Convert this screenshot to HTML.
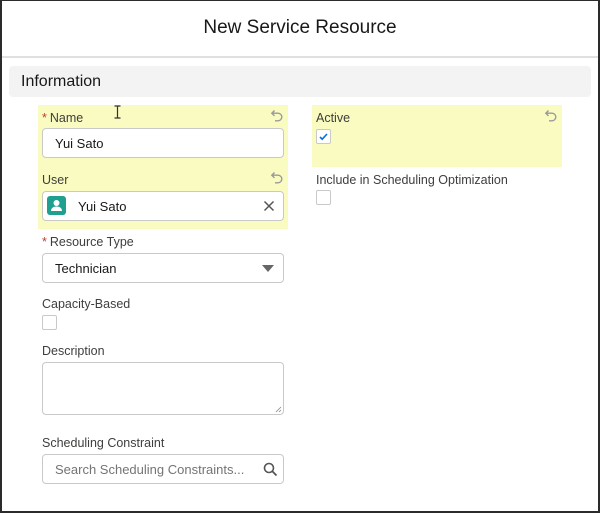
<!DOCTYPE html>
<html><head><style>
*{box-sizing:border-box;margin:0;padding:0}
body{width:600px;height:513px;background:#fff;font-family:"Liberation Sans",Arial,sans-serif;color:#181818;position:relative;overflow:hidden}
.frame{position:absolute;left:0;top:0;width:600px;height:513px;border:2px solid #2b2b2b;border-top-width:1px}
.a{position:absolute}
.title{left:0;width:600px;top:17px;text-align:center;font-size:19px;color:#181818}
.hline{left:2px;top:56px;width:596px;height:2px;background:#e0e0e0}
.sec{left:9px;top:66px;width:582px;height:31px;background:#f3f3f3;border-radius:4px}
.sec span{position:absolute;left:12px;top:7px;font-size:16px}
.hl{background:#fafbc0}
.lbl{font-size:12.5px;color:#3e3e3c}
.req{color:#c23934;margin-right:3px}
.inp{background:#fff;border:1px solid #c9c9c9;border-radius:4px;font-size:13px;color:#181818;padding-left:12px;display:flex;align-items:center}
.cb{width:15px;height:15px;border:1px solid #c9c9c9;border-radius:2px;background:#fff}
.undo{width:14px;height:14px}
</style></head><body>
<div class="frame"></div>
<div class="a title">New Service Resource</div>
<div class="a hline"></div>
<div class="a sec"><span>Information</span></div>

<div class="a hl" style="left:38px;top:105px;width:250px;height:124px"></div>
<div class="a hl" style="left:312px;top:105px;width:250px;height:62px"></div>

<svg class="a undo" style="left:270px;top:109px" viewBox="0 0 14 14"><path d="M4.5 1.5L1.8 4.2L4.5 6.9M1.8 4.2H8a3.8 3.8 0 0 1 0 7.6H5" fill="none" stroke="#9a9a9a" stroke-width="1.4"/></svg>
<svg class="a undo" style="left:270px;top:171px" viewBox="0 0 14 14"><path d="M4.5 1.5L1.8 4.2L4.5 6.9M1.8 4.2H8a3.8 3.8 0 0 1 0 7.6H5" fill="none" stroke="#9a9a9a" stroke-width="1.4"/></svg>
<svg class="a undo" style="left:544px;top:109px" viewBox="0 0 14 14"><path d="M4.5 1.5L1.8 4.2L4.5 6.9M1.8 4.2H8a3.8 3.8 0 0 1 0 7.6H5" fill="none" stroke="#9a9a9a" stroke-width="1.4"/></svg>

<svg class="a" style="left:113px;top:105px" width="9" height="14" viewBox="0 0 9 14"><path d="M1.5 1h6M4.5 1v12M1.5 13h6" stroke="#333" stroke-width="1.2" fill="none"/></svg>

<div class="a lbl" style="left:42px;top:111px"><span class="req">*</span>Name</div>
<div class="a inp" style="left:42px;top:128px;width:242px;height:30px">Yui Sato</div>

<div class="a lbl" style="left:42px;top:173px">User</div>
<div class="a inp" style="left:42px;top:191px;width:242px;height:30px;padding-left:35px">Yui Sato</div>
<div class="a" style="left:47px;top:196px;width:19px;height:19px;background:#1f9f90;border-radius:3px">
<svg width="19" height="19" viewBox="0 0 19 19"><circle cx="9.5" cy="7" r="3" fill="#fff"/><path d="M4 15c0-3 2.5-4.5 5.5-4.5S15 12 15 15z" fill="#fff"/></svg></div>
<svg class="a" style="left:263px;top:200px" width="12" height="12" viewBox="0 0 12 12"><path d="M1.5 1.5l9 9M10.5 1.5l-9 9" stroke="#555" stroke-width="1.5"/></svg>

<div class="a lbl" style="left:42px;top:235px"><span class="req">*</span>Resource Type</div>
<div class="a inp" style="left:42px;top:253px;width:242px;height:30px">Technician</div>
<svg class="a" style="left:262px;top:265px" width="12" height="8" viewBox="0 0 12 8"><path d="M0 0h12L6 7z" fill="#666"/></svg>

<div class="a lbl" style="left:42px;top:297px">Capacity-Based</div>
<div class="a cb" style="left:42px;top:315px"></div>

<div class="a lbl" style="left:42px;top:344px">Description</div>
<div class="a inp" style="left:42px;top:362px;width:242px;height:53px"></div>
<svg class="a" style="left:275px;top:406px" width="7" height="7" viewBox="0 0 7 7"><path d="M1 6L6 1M4 6L6 4" stroke="#888" stroke-width="0.8"/></svg>

<div class="a lbl" style="left:42px;top:436px">Scheduling Constraint</div>
<div class="a inp" style="left:42px;top:454px;width:242px;height:30px;color:#747474">Search Scheduling Constraints...</div>
<svg class="a" style="left:263px;top:462px" width="15" height="15" viewBox="0 0 15 15"><circle cx="6" cy="6" r="4.5" fill="none" stroke="#555" stroke-width="1.6"/><path d="M9.3 9.3L13.5 13.5" stroke="#555" stroke-width="1.8"/></svg>

<div class="a lbl" style="left:316px;top:111px">Active</div>
<div class="a cb" style="left:316px;top:129px"></div>
<svg class="a" style="left:318px;top:131px" width="11" height="11" viewBox="0 0 11 11"><path d="M2 6l2.2 2.2L9 3" fill="none" stroke="#0b6fd6" stroke-width="1.6"/></svg>

<div class="a lbl" style="left:316px;top:173px">Include in Scheduling Optimization</div>
<div class="a cb" style="left:316px;top:190px"></div>
</body></html>
